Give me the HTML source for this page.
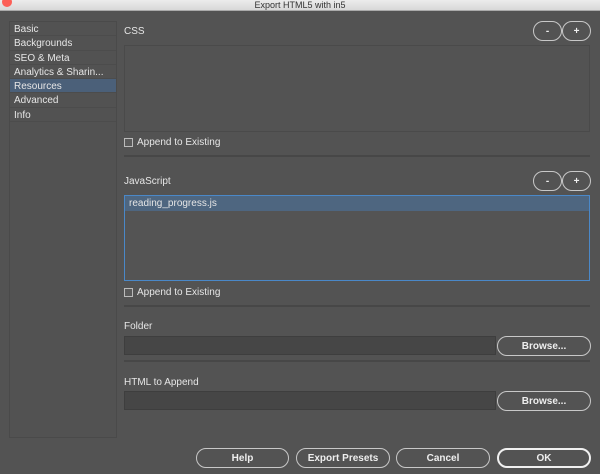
<!DOCTYPE html>
<html><head><style>
*{margin:0;padding:0;box-sizing:border-box}
body{width:600px;height:474px;background:#535353;font-family:"Liberation Sans",sans-serif;font-size:10px;color:#e6e6e6;position:relative;overflow:hidden}
.a{position:absolute}
.title{left:0;top:0;width:600px;height:11px;background:linear-gradient(#ececec,#d8d8d8);color:#333;text-align:center;font-size:9px;line-height:10px;border-bottom:1px solid #aaa}
.dot{left:2px;top:-3px;width:10px;height:10px;border-radius:50%;background:#fc5f57}
.side{left:9px;top:21px;width:108px;height:417px;border:1px solid #4a4a4a;background:#525252}
.it{height:14.3px;line-height:15px;padding-left:4px;border-bottom:1px solid #4c4c4c}
.sel{background:#4b6079}
.btn{border:1px solid #c8c8c8;border-radius:10px;text-align:center;font-weight:bold;color:#eee;line-height:19px;height:20px}
.box{border:1px solid #4a4a4a}
.inp{background:#464646;border:1px solid #3e3e3e}
.sep{height:2px;background:#474747;left:124px;width:466px}
.cb{width:9px;height:9px;border:1px solid #bbb;background:#5a5a5a}
</style></head><body>
<div class="a title">Export HTML5 with in5</div>
<div class="a dot"></div>
<div class="a side">
<div class="it">Basic</div><div class="it">Backgrounds</div><div class="it">SEO &amp; Meta</div><div class="it">Analytics &amp; Sharin...</div><div class="it sel">Resources</div><div class="it">Advanced</div><div class="it">Info</div>
</div>
<div class="a" style="left:124px;top:26px">CSS</div>
<div class="a btn" style="left:533px;top:21px;width:29px">-</div>
<div class="a btn" style="left:562px;top:21px;width:29px">+</div>
<div class="a box" style="left:124px;top:45px;width:466px;height:87px"></div>
<div class="a cb" style="left:124px;top:138px"></div>
<div class="a" style="left:137px;top:137px">Append to Existing</div>
<div class="a sep" style="top:155px"></div>
<div class="a" style="left:124px;top:176px">JavaScript</div>
<div class="a btn" style="left:533px;top:171px;width:29px">-</div>
<div class="a btn" style="left:562px;top:171px;width:29px">+</div>
<div class="a" style="left:124px;top:195px;width:466px;height:86px;border:1px solid #4a88c8;background:#545454"><div style="background:#4e6680;height:15px;line-height:15px;padding-left:4px">reading_progress.js</div></div>
<div class="a cb" style="left:124px;top:288px"></div>
<div class="a" style="left:137px;top:287px">Append to Existing</div>
<div class="a sep" style="top:305px"></div>
<div class="a" style="left:124px;top:321px">Folder</div>
<div class="a inp" style="left:124px;top:336px;width:372px;height:19px"></div>
<div class="a btn" style="left:497px;top:336px;width:94px">Browse...</div>
<div class="a sep" style="top:360px"></div>
<div class="a" style="left:124px;top:377px">HTML to Append</div>
<div class="a inp" style="left:124px;top:391px;width:372px;height:19px"></div>
<div class="a btn" style="left:497px;top:391px;width:94px">Browse...</div>
<div class="a btn" style="left:196px;top:448px;width:93px">Help</div>
<div class="a btn" style="left:296px;top:448px;width:94px">Export Presets</div>
<div class="a btn" style="left:396px;top:448px;width:94px">Cancel</div>
<div class="a btn" style="left:497px;top:448px;width:94px;border:2px solid #f0f0f0;line-height:17px">OK</div>
</body></html>
